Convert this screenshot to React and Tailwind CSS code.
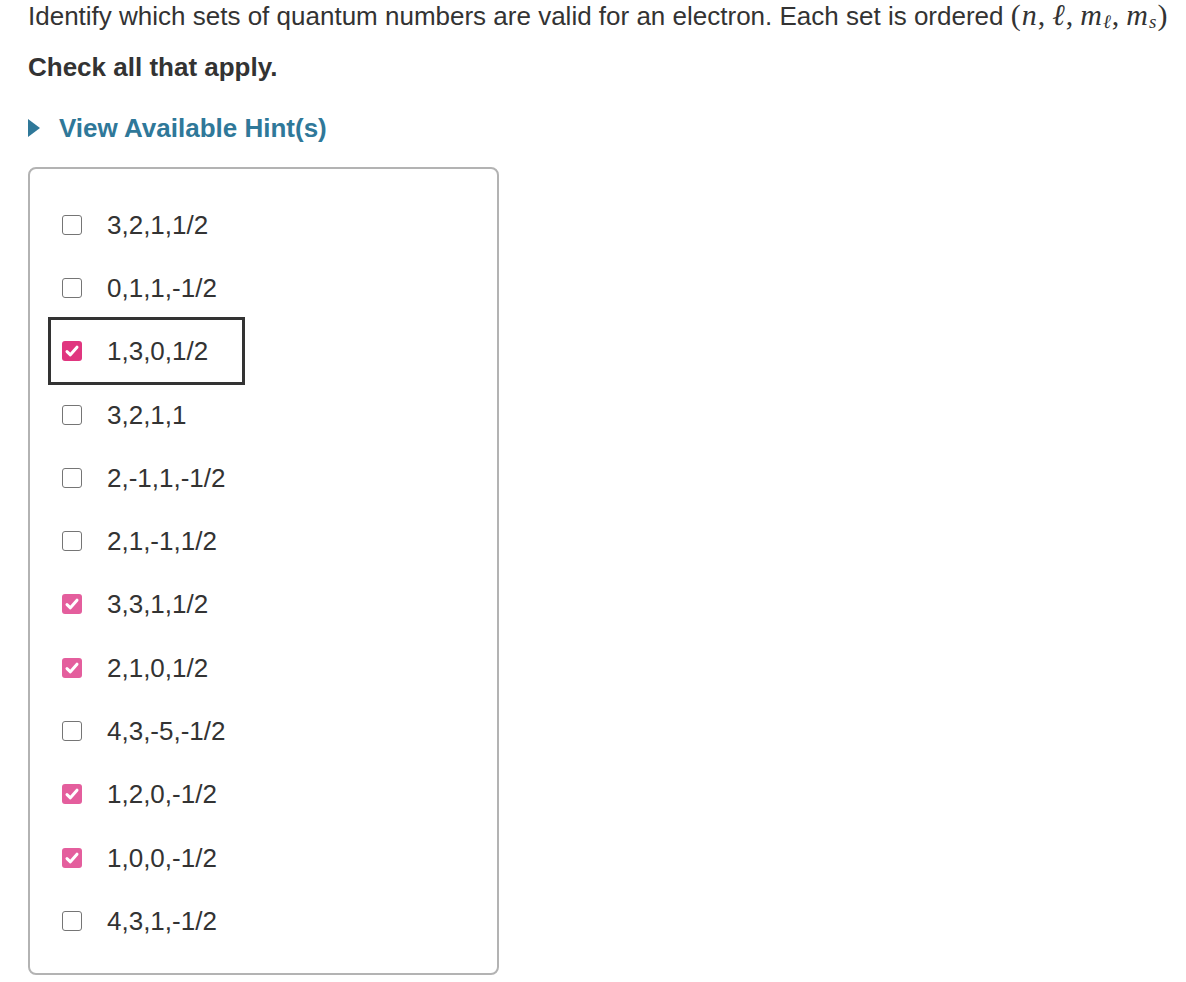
import React from 'react';

const options = [
    { label: '3,2,1,1/2', checked: false },
    { label: '0,1,1,-1/2', checked: false },
    { label: '1,3,0,1/2', checked: true, focused: true },
    { label: '3,2,1,1', checked: false },
    { label: '2,-1,1,-1/2', checked: false },
    { label: '2,1,-1,1/2', checked: false },
    { label: '3,3,1,1/2', checked: true },
    { label: '2,1,0,1/2', checked: true },
    { label: '4,3,-5,-1/2', checked: false },
    { label: '1,2,0,-1/2', checked: true },
    { label: '1,0,0,-1/2', checked: true },
    { label: '4,3,1,-1/2', checked: false },
];

const Box = ({ checked, focused }) => {
    if (!checked) {
        return <div className="w-[20px] h-[20px] rounded-[3px] border-[1.5px] border-[#757575] bg-white shrink-0" />;
    }
    return (
        <div className={`w-[20px] h-[20px] rounded-[3px] shrink-0 flex items-center justify-center ${focused ? 'bg-[#e0367f]' : 'bg-[#e45e9d]'}`}>
            <svg width="16" height="16" viewBox="0 0 16 16">
                <path d="M3 8.6 L6.4 11.8 L13 4.2" fill="none" stroke="white" strokeWidth="3" strokeLinecap="round" strokeLinejoin="round" />
            </svg>
        </div>
    );
};

const App = () => {
    return (
        <div className="bg-white min-h-[982px] text-[#333] font-['Liberation_Sans',Arial,sans-serif] pl-[28px]">
            {/* Question */}
            <p className="h-[32px] text-[26px] leading-[32px] whitespace-nowrap">
                Identify which sets of quantum numbers are valid for an electron. Each set is ordered{' '}
                <span className="font-['Liberation_Serif',serif] text-[30px] leading-none tracking-[1px]">
                    (<i>n</i>,<span className="ml-[6px]" /><i>ℓ</i>,<span className="ml-[6px]" /><i>m</i><sub className="text-[19px] leading-none -bottom-[3px]"><i>ℓ</i></sub>,<span className="ml-[6px]" /><i>m</i><sub className="text-[19px] leading-none -bottom-[3px]"><i>s</i></sub>)
                </span>
            </p>
            <p className="text-[26px] leading-[32px] font-bold mt-[19px]">Check all that apply.</p>

            {/* Hint */}
            <div className="flex items-center gap-[19px] mt-[29px] text-[#2f7899]">
                <svg width="12" height="18" viewBox="0 0 12 18">
                    <path d="M0 0 L12 9 L0 18 Z" fill="#2f7899" />
                </svg>
                <span className="text-[26px] leading-[32px] font-bold">View Available Hint(s)</span>
            </div>

            {/* Options */}
            <div className="mt-[23px] w-[471px] h-[808px] border-[2px] border-[#b3b3b3] rounded-[8px] pt-[24px] pl-[18px]">
                {options.map((o) => (
                    <div key={o.label} className="h-[63.3px] flex items-center">
                        <div className={`flex items-center gap-[25px] pl-[11px] pr-[34px] h-[68px] border-[3px] ${o.focused ? 'border-[#333]' : 'border-transparent'}`}>
                            <Box checked={o.checked} focused={o.focused} />
                            <span className="text-[26px] leading-[32px]">{o.label}</span>
                        </div>
                    </div>
                ))}
            </div>
        </div>
    );
};

export default App;
